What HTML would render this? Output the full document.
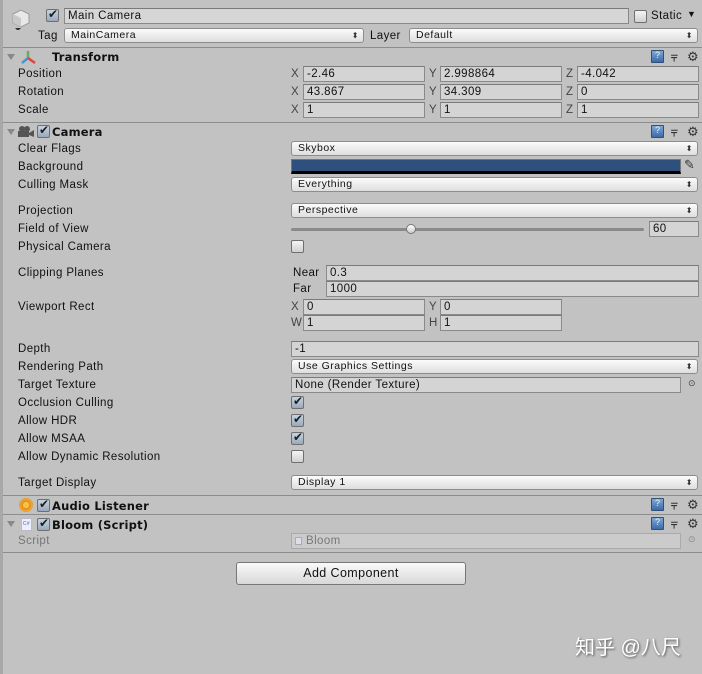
<!DOCTYPE html>
<html><head><meta charset="utf-8"><style>
*{box-sizing:border-box;margin:0;padding:0}
body{width:702px;height:674px;background:#c2c2c2;font-family:"Liberation Sans","DejaVu Sans",sans-serif;font-size:11.5px;color:#111;position:relative;overflow:hidden;letter-spacing:.4px}
.a{position:absolute;white-space:nowrap}
.lbl{position:absolute;left:18px;line-height:14px}
.fld{position:absolute;height:16px;background:#d4d4d4;border:1px solid #8a8a8a;border-top-color:#7a7a7a;padding-left:3px;line-height:14px}
.dd{position:absolute;left:291px;width:407px;height:15px;border:1px solid #8d8d8d;border-radius:3px;background:linear-gradient(#fbfbfb,#dedede);padding-left:6px;font-size:10.5px;line-height:13px;letter-spacing:.5px}
.dd:after{content:"⬍";position:absolute;right:4px;top:0;font-size:8px;color:#333}
.ax{position:absolute;line-height:14px;color:#444}
.sep{position:absolute;left:3px;right:0;height:1px;background:#8c8c8c}
.hdr{position:absolute;font-weight:bold;line-height:14px;font-family:"DejaVu Sans",sans-serif;font-size:11.5px;letter-spacing:.2px}
.cb{position:absolute;width:13px;height:13px;border:1px solid #6f6f6f;border-radius:2px;background:linear-gradient(#f4f4f4,#d0d0d0)}
.cb.on{background:linear-gradient(#c9d3e0,#9aa8bb)}
.cb.on:after{content:"✔";position:absolute;left:1px;top:-3px;font-size:12px;color:#122;font-weight:bold}
.tri{position:absolute;width:0;height:0;border-left:4px solid transparent;border-right:4px solid transparent;border-top:6px solid #888}
.icons{position:absolute;left:651px;width:50px;height:14px}
.book{position:absolute;left:0;top:0;width:13px;height:13px;background:linear-gradient(#7fa6d6,#3d6aa8);border:1px solid #2f4f7d;border-radius:1px}
.book:after{content:"?";position:absolute;left:3px;top:-1px;font-size:9px;color:#dfe}
.sl{position:absolute;left:20px;top:0;font-size:12px;font-weight:bold;color:#333;letter-spacing:-1px}
.gear{position:absolute;left:36px;top:-1px;font-size:13px;color:#333}
</style></head><body>
<div class="a" style="left:0;top:0;width:3px;height:674px;background:#a8a8a8"></div>
<div class="a" style="left:10px;top:8px;width:22px;height:22px">
<svg width="22" height="22"><polygon points="3,6 11,2 19,6 19,15 11,19 3,15" fill="#e8e8e8" stroke="#999"/><polygon points="3,6 11,10 11,19 3,15" fill="#c8c8c8"/><polygon points="5,20 11,20 8,23" fill="#333"/></svg></div>
<div class="cb on" style="left:46px;top:9px"></div>
<div class="fld" style="left:64px;top:8px;width:565px;background:#d6d6d6">Main Camera</div>
<div class="cb" style="left:634px;top:10px"></div>
<div class="a" style="left:651px;top:9px;line-height:14px">Static</div>
<div class="a" style="left:687px;top:9px;font-size:9px">▼</div>
<div class="a" style="left:38px;top:29px;line-height:14px">Tag</div>
<div class="dd" style="left:64px;width:300px;top:28px">MainCamera</div>
<div class="a" style="left:370px;top:29px;line-height:14px">Layer</div>
<div class="dd" style="left:409px;width:289px;top:28px">Default</div>
<div class="sep" style="top:47px"></div>
<div class="tri" style="left:7px;top:54px"></div>
<svg class="a" style="left:20px;top:50px" width="16" height="14"><line x1="8" y1="8" x2="8" y2="1" stroke="#6a6" stroke-width="2.5"/><line x1="8" y1="8" x2="2" y2="13" stroke="#49c" stroke-width="2.5"/><line x1="8" y1="8" x2="15" y2="13" stroke="#d44" stroke-width="2.5"/></svg>
<div class="hdr" style="left:52px;top:50px">Transform</div>
<div class="icons" style="top:50px"><div class="book"></div><div class="sl">⫧</div><div class="gear">⚙</div></div>
<div class="lbl" style="top:67px">Position</div>
<div class="lbl" style="top:85px">Rotation</div>
<div class="lbl" style="top:103px">Scale</div>
<div class="ax" style="left:291px;top:67px">X</div><div class="fld" style="left:303px;top:66px;width:122px">-2.46</div>
<div class="ax" style="left:429px;top:67px">Y</div><div class="fld" style="left:440px;top:66px;width:122px">2.998864</div>
<div class="ax" style="left:566px;top:67px">Z</div><div class="fld" style="left:577px;top:66px;width:122px">-4.042</div>
<div class="ax" style="left:291px;top:85px">X</div><div class="fld" style="left:303px;top:84px;width:122px">43.867</div>
<div class="ax" style="left:429px;top:85px">Y</div><div class="fld" style="left:440px;top:84px;width:122px">34.309</div>
<div class="ax" style="left:566px;top:85px">Z</div><div class="fld" style="left:577px;top:84px;width:122px">0</div>
<div class="ax" style="left:291px;top:103px">X</div><div class="fld" style="left:303px;top:102px;width:122px">1</div>
<div class="ax" style="left:429px;top:103px">Y</div><div class="fld" style="left:440px;top:102px;width:122px">1</div>
<div class="ax" style="left:566px;top:103px">Z</div><div class="fld" style="left:577px;top:102px;width:122px">1</div>
<div class="sep" style="top:122px"></div>
<div class="tri" style="left:7px;top:129px"></div>
<svg class="a" style="left:17px;top:126px" width="18" height="12"><circle cx="5" cy="3" r="3" fill="#555"/><circle cx="10" cy="3" r="3" fill="#555"/><rect x="1" y="5" width="11" height="6" fill="#555"/><polygon points="12,7 17,4 17,11 12,9" fill="#555"/></svg>
<div class="cb on" style="left:37px;top:125px"></div>
<div class="hdr" style="left:52px;top:125px">Camera</div>
<div class="icons" style="top:125px"><div class="book"></div><div class="sl">⫧</div><div class="gear">⚙</div></div>
<div class="lbl" style="top:142px">Clear Flags</div>
<div class="dd" style="top:141px">Skybox</div>
<div class="lbl" style="top:160px">Background</div>
<div class="a" style="left:291px;top:159px;width:390px;height:15px;border:1px solid #777;background:#2f4f7d;border-bottom:3px solid #000"></div>
<div class="a" style="left:684px;top:157px;font-size:13px;color:#333">✎</div>
<div class="lbl" style="top:178px">Culling Mask</div>
<div class="dd" style="top:177px">Everything</div>
<div class="lbl" style="top:204px">Projection</div>
<div class="dd" style="top:203px">Perspective</div>
<div class="lbl" style="top:222px">Field of View</div>
<div class="a" style="left:291px;top:228px;width:353px;height:3px;background:#8a8a8a;border-radius:2px"></div>
<div class="a" style="left:406px;top:224px;width:10px;height:10px;border-radius:50%;background:linear-gradient(#fff,#ccc);border:1px solid #777"></div>
<div class="fld" style="left:649px;top:221px;width:50px">60</div>
<div class="lbl" style="top:240px">Physical Camera</div>
<div class="cb" style="left:291px;top:240px"></div>
<div class="lbl" style="top:266px">Clipping Planes</div>
<div class="ax" style="left:293px;top:266px;color:#111">Near</div><div class="fld" style="left:326px;top:265px;width:373px">0.3</div>
<div class="ax" style="left:293px;top:282px;color:#111">Far</div><div class="fld" style="left:326px;top:281px;width:373px">1000</div>
<div class="lbl" style="top:300px">Viewport Rect</div>
<div class="ax" style="left:291px;top:300px">X</div><div class="fld" style="left:303px;top:299px;width:122px">0</div>
<div class="ax" style="left:429px;top:300px">Y</div><div class="fld" style="left:440px;top:299px;width:122px">0</div>
<div class="ax" style="left:291px;top:316px">W</div><div class="fld" style="left:303px;top:315px;width:122px">1</div>
<div class="ax" style="left:429px;top:316px">H</div><div class="fld" style="left:440px;top:315px;width:122px">1</div>
<div class="lbl" style="top:342px">Depth</div>
<div class="fld" style="left:291px;top:341px;width:408px">-1</div>
<div class="lbl" style="top:360px">Rendering Path</div>
<div class="dd" style="top:359px">Use Graphics Settings</div>
<div class="lbl" style="top:378px">Target Texture</div>
<div class="fld" style="left:291px;top:377px;width:390px">None (Render Texture)</div>
<div class="a" style="left:688px;top:378px;font-size:9px;color:#444">⊙</div>
<div class="lbl" style="top:396px">Occlusion Culling</div><div class="cb on" style="left:291px;top:396px"></div>
<div class="lbl" style="top:414px">Allow HDR</div><div class="cb on" style="left:291px;top:414px"></div>
<div class="lbl" style="top:432px">Allow MSAA</div><div class="cb on" style="left:291px;top:432px"></div>
<div class="lbl" style="top:450px">Allow Dynamic Resolution</div><div class="cb" style="left:291px;top:450px"></div>
<div class="lbl" style="top:476px">Target Display</div>
<div class="dd" style="top:475px">Display 1</div>
<div class="sep" style="top:495px"></div>
<div class="a" style="left:19px;top:498px;width:14px;height:14px;border-radius:50%;background:radial-gradient(#f7c04a 30%,#e08a10 35%,#f0a838 60%,#b8700a)"></div>
<div class="cb on" style="left:37px;top:499px"></div>
<div class="hdr" style="left:52px;top:499px">Audio Listener</div>
<div class="icons" style="top:498px"><div class="book"></div><div class="sl">⫧</div><div class="gear">⚙</div></div>
<div class="sep" style="top:514px"></div>
<div class="tri" style="left:7px;top:521px"></div>
<div class="a" style="left:21px;top:518px;width:11px;height:13px;background:#eef;border:1px solid #bbc;font-size:5px;color:#46a;line-height:11px;text-align:center">C#</div>
<div class="cb on" style="left:37px;top:518px"></div>
<div class="hdr" style="left:52px;top:518px">Bloom (Script)</div>
<div class="icons" style="top:517px"><div class="book"></div><div class="sl">⫧</div><div class="gear">⚙</div></div>
<div class="lbl" style="top:534px;color:#777">Script</div>
<div class="fld" style="left:291px;top:533px;width:390px;color:#777;background:#cbcbcb;border-color:#aaa;padding-left:14px">Bloom</div>
<div class="a" style="left:295px;top:537px;width:7px;height:8px;background:#dde;border:1px solid #aab"></div>
<div class="a" style="left:688px;top:534px;font-size:9px;color:#888">⊙</div>
<div class="sep" style="top:552px"></div>
<div class="a" style="left:236px;top:562px;width:230px;height:23px;border:1px solid #777;border-radius:3px;background:linear-gradient(#fafafa,#d8d8d8);text-align:center;line-height:21px;font-size:12.5px">Add Component</div>
<div class="a" style="left:575px;top:631px;font-size:20px;color:#fff;text-shadow:1px 1px 2px #555;letter-spacing:0;font-family:'Liberation Sans','Noto Sans CJK SC',sans-serif">知乎 @八尺</div>
</body></html>
